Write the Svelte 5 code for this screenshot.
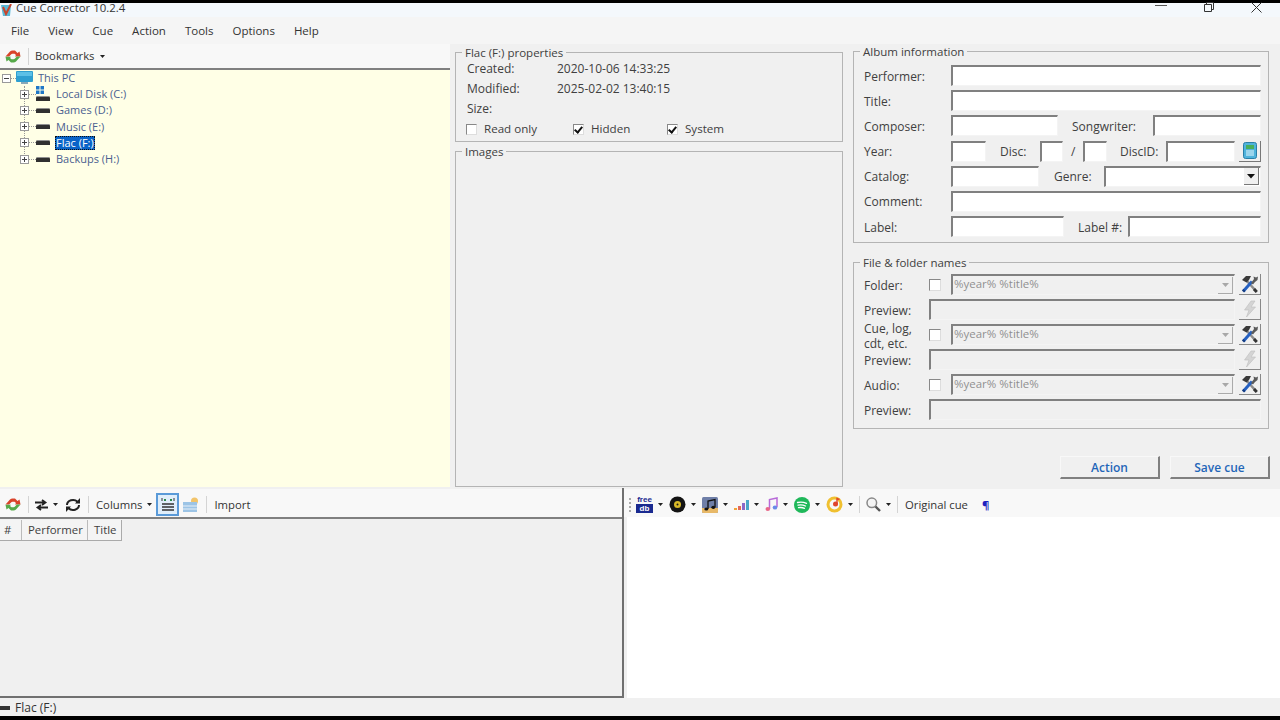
<script>
	const menus = ["File", "View", "Cue", "Action", "Tools", "Options", "Help"];
	const drives = [
		{ name: "Local Disk (C:)", win: true },
		{ name: "Games (D:)" },
		{ name: "Music (E:)" },
		{ name: "Flac (F:)", selected: true },
		{ name: "Backups (H:)" },
	];
	const nameRows = [
		{ label: "Folder:" },
		{ label: "Cue, log,\ncdt, etc." },
		{ label: "Audio:" },
	];
</script>

{#snippet caret()}
	<svg class="caret" width="5" height="3" viewBox="0 0 5 3"><path d="M0 0h5L2.500 3z" fill="#222" /></svg>
{/snippet}

{#snippet reload()}
	<svg width="16" height="13" viewBox="0 0 16 13">
		<path d="M.5 6.500 L5 1.500 Q6 .5 7.500 .5 H10 L12.500 3 L14.500 1.500 L15.500 6.500 H10 L11 5 L9.500 3.800 H7.500 Q6.500 3.800 6 4.500 L4.200 6.500z" fill="#d9432a" />
		<path d="M15.500 6.500 L11 11.500 Q10 12.500 8.500 12.500 H6 L3.500 10 L1.500 11.500 L.5 6.800 H6 L5 8 L6.500 9.200 H8.500 Q9.500 9.200 10 8.500 L11.800 6.500z" fill="#56a94a" />
	</svg>
{/snippet}

{#snippet drive()}
	<svg width="14" height="5" viewBox="0 0 14 5"><path d="M1 0h12l1 1.500V5H0V1.500z" fill="#303030" /><path d="M1 .5h12" stroke="#909090" /></svg>
{/snippet}

{#snippet tools()}
	<svg width="18" height="18" viewBox="0 0 18 18">
		<path d="M14.500 15.500 L6 6" stroke="#8c8c8c" stroke-width="2.600" />
		<path d="M15.800 17 L13 14" stroke="#333" stroke-width="3" />
		<path d="M2.500 16 L11 6.500" stroke="#2560c0" stroke-width="3" />
		<path d="M2 16.500l1.500-1.500" stroke="#123a80" stroke-width="3" />
		<path d="M1 5 L5 1 H10 L9 3 L8 5 L5.500 7.500z" fill="#3a3a3a" />
		<path d="M10 8 L13 4 L12.500 1.500 L15 2.500 L17 1.500 L16.500 5 L14 7 L12 9.500z" fill="#5a5a5a" />
	</svg>
{/snippet}

{#snippet bolt()}
	<svg width="14" height="18" viewBox="0 0 14 18"><path d="M8 1 L1.500 10 H6 L3.500 17 L12.500 7 H8 L12 1z" fill="#d4d4d4" stroke="#bdbdbd" stroke-width=".6" /></svg>
{/snippet}

<div class="app">
	<div class="blackbar"></div>

	<header class="titlebar">
		<svg class="appicon" width="11" height="12" viewBox="0 0 11 12">
			<path d="M0 1h10l-1 11H2z" fill="#58b7d6" />
			<path d="M2 3 L5 10 L10 0" fill="none" stroke="#c8452c" stroke-width="2" />
		</svg>
		<span class="apptitle">Cue Corrector 10.2.4</span>
		<div class="winbtns">
			<svg class="minbtn" width="12" height="6" viewBox="0 0 12 6"><path d="M0 3.500h12" stroke="#555" /></svg>
			<svg width="10" height="10" viewBox="0 0 10 10"><path d="M.5 2.500h7v7h-7zM2.500 2.500v-2h7v7h-2" fill="none" stroke="#333" /></svg>
			<svg width="11" height="11" viewBox="0 0 11 11"><path d="M.5 .5l10 10M10.500 .5l-10 10" stroke="#333" /></svg>
		</div>
	</header>

	<nav class="menubar">
		{#each menus as m}
			<span>{m}</span>
		{/each}
	</nav>

	<main class="main">
		<section class="leftpane">
			<div class="toolbar tb-top">
				<span class="ic-reload">{@render reload()}</span>
				<i class="sep"></i>
				<span class="tbtext">Bookmarks</span>
				{@render caret()}
			</div>
			<div class="tree">
				<div class="row root">
					<b class="exp minus"></b>
					<i class="dots short"></i>
					<svg width="17" height="14" viewBox="0 0 17 14">
						<rect x="0" y="0" width="17" height="11" rx="1" fill="#2f9fd0" />
						<rect x="1" y="1" width="15" height="4" fill="#5cc0e6" />
						<path d="M5 11h7v2H5z" fill="#8aa9b8" />
					</svg>
					<span class="node rootname">This PC</span>
				</div>
				<div class="children">
					{#each drives as d}
						<div class="row">
							<b class="exp"></b>
							<i class="dots"></i>
							<span class="driveic" class:win={d.win}>
								{#if d.win}
									<svg class="winlogo" width="8" height="8" viewBox="0 0 8 8"><path d="M0 0h3.500v3.500H0zM4.500 0H8v3.500H4.500zM0 4.500h3.500V8H0zM4.500 4.500H8V8H4.500z" fill="#1f78c8" /></svg>
								{/if}
								{@render drive()}
							</span>
							<span class="node" class:selected={d.selected}>{d.name}</span>
						</div>
					{/each}
				</div>
			</div>
		</section>

		<section class="midpane">
			<fieldset class="props">
				<legend>Flac (F:) properties</legend>
				<div class="prop"><span class="k">Created:</span><span>2020-10-06 14:33:25</span></div>
				<div class="prop"><span class="k">Modified:</span><span>2025-02-02 13:40:15</span></div>
				<div class="prop"><span class="k">Size:</span></div>
				<div class="checks">
					<label class="chk c1"><b class="box"></b>Read only</label>
					<label class="chk c2"><b class="box on"></b>Hidden</label>
					<label class="chk"><b class="box on"></b>System</label>
				</div>
			</fieldset>
			<fieldset class="images">
				<legend>Images</legend>
			</fieldset>
		</section>

		<section class="rightpane">
			<fieldset class="album">
				<legend>Album information</legend>
				<div class="frow"><span class="lab">Performer:</span><b class="in grow"></b></div>
				<div class="frow"><span class="lab">Title:</span><b class="in grow"></b></div>
				<div class="frow">
					<span class="lab">Composer:</span><b class="in w107"></b>
					<span class="lab2 l-song">Songwriter:</span><b class="in grow"></b>
				</div>
				<div class="frow">
					<span class="lab">Year:</span><b class="in w35"></b>
					<span class="lab2 l-disc">Disc:</span><b class="in w23"></b>
					<span class="lab2 l-slash">/</span><b class="in w24"></b>
					<span class="lab2 l-id">DiscID:</span><b class="in w69"></b>
					<span class="idbtn">
						<svg width="14" height="17" viewBox="0 0 14 17">
							<rect x=".5" y=".5" width="13" height="16" rx="2" fill="#4fb3dc" stroke="#2a7fa8" />
							<rect x="3" y="3" width="8" height="4" fill="#49b05a" />
							<path d="M3 9h8M3 11h8M3 13h8" stroke="#e8f6fc" />
						</svg>
					</span>
				</div>
				<div class="frow">
					<span class="lab">Catalog:</span><b class="in w88"></b>
					<span class="lab2 l-genre">Genre:</span>
					<b class="in grow combo"><span class="drop"><svg width="8" height="5" viewBox="0 0 8 5"><path d="M0 0h8L4 4.500z" fill="#111" /></svg></span></b>
				</div>
				<div class="frow"><span class="lab">Comment:</span><b class="in grow"></b></div>
				<div class="frow">
					<span class="lab">Label:</span><b class="in w113"></b>
					<span class="lab2 l-num">Label #:</span><b class="in grow"></b>
				</div>
			</fieldset>

			<fieldset class="names">
				<legend>File &amp; folder names</legend>
				{#each nameRows as r, i}
					<div class="frow nrow">
						<span class="nlab">{r.label}</span>
						<b class="box small"></b>
						<b class="in grow combo off">
							<span class="val">%year% %title%</span>
							<span class="drop dis"><svg width="7" height="4" viewBox="0 0 7 4"><path d="M0 0h7L3.500 4z" fill="#a8a8a8" /></svg></span>
						</b>
						<span class="toolbtn">{@render tools()}</span>
					</div>
					<div class="frow nrow">
						<span class="nlab">Preview:</span>
						<b class="in grow off"></b>
						{#if i < 2}
							<span class="toolbtn">{@render bolt()}</span>
						{/if}
					</div>
				{/each}
			</fieldset>

			<div class="actions">
				<button>Action</button>
				<button>Save cue</button>
			</div>
		</section>
	</main>

	<section class="bottom">
		<div class="listpane">
			<div class="toolbar tb-list">
				<span class="ic-reload">{@render reload()}</span>
				<i class="sep"></i>
				<svg class="ic-swap" width="13" height="12" viewBox="0 0 13 12">
					<path d="M0 3.500h10M7 1l3.500 2.500L7 6" fill="none" stroke="#222" stroke-width="1.800" />
					<path d="M13 8.500H3M6 6L2.500 8.500 6 11" fill="none" stroke="#222" stroke-width="1.800" />
				</svg>
				{@render caret()}
				<svg class="ic-sync" width="16" height="14" viewBox="0 0 16 14">
					<path d="M2 7a6 5 0 0 1 10.500-3.300M14 7a6 5 0 0 1-10.500 3.300" fill="none" stroke="#222" stroke-width="2" />
					<path d="M15 0v5.500H10zM1 14V8.500h5z" fill="#222" />
				</svg>
				<i class="sep s-cols"></i>
				<span class="tbtext">Columns</span>
				{@render caret()}
				<span class="toggled">
					<svg width="14" height="16" viewBox="0 0 14 16">
						<path d="M1 1v3M13 1v3" stroke="#333" />
						<path d="M3 3h2M9 3h2" stroke="#2a8a4a" stroke-width="2" />
						<path d="M1 7h12M1 10h12M1 13h12" stroke="#333" stroke-width="1.400" />
					</svg>
				</span>
				<svg class="ic-import" width="16" height="16" viewBox="0 0 16 16">
					<circle cx="11.500" cy="4" r="3.500" fill="#f2c46a" />
					<rect x="0" y="5" width="14" height="10" fill="#9cc4e6" />
					<path d="M0 9h14M0 12h14" stroke="#e8f0f8" />
				</svg>
				<i class="sep s-imp"></i>
				<span class="tbtext">Import</span>
			</div>
			<div class="thead">
				<span class="th hash">#</span>
				<span class="th perf">Performer</span>
				<span class="th ttl">Title</span>
			</div>
		</div>

		<div class="cuepane">
			<div class="toolbar tb-cue">
				<i class="grip"></i>
				<span class="freedb"><em>free</em><strong>db</strong></span>
				{@render caret()}
				<svg width="17" height="17" viewBox="0 0 17 17">
					<circle cx="8.500" cy="8.500" r="8" fill="#141414" />
					<circle cx="8.500" cy="8.500" r="3.500" fill="#d8b928" />
					<circle cx="8.500" cy="8.500" r="1" fill="#141414" />
				</svg>
				{@render caret()}
				<svg width="16" height="16" viewBox="0 0 16 16">
					<rect width="16" height="16" rx="1.500" fill="#6f7fa8" />
					<path d="M0 11h16v3.500a1.500 1.500 0 0 1-1.500 1.500h-13A1.500 1.500 0 0 1 0 14.500z" fill="#e8b968" />
					<path d="M6 12V4l7-1.500V10" fill="none" stroke="#111" stroke-width="1.300" />
					<ellipse cx="4.300" cy="12" rx="2" ry="1.600" fill="#111" />
					<ellipse cx="11.300" cy="10.300" rx="2" ry="1.600" fill="#111" />
				</svg>
				{@render caret()}
				<svg width="15" height="12" viewBox="0 0 15 12">
					<path d="M0 9h3v2H0z" fill="#f2a33a" />
					<path d="M4 7h3v4H4z" fill="#e46a5a" />
					<path d="M8 4h3v7H8z" fill="#8a6ac8" />
					<path d="M12 1h3v10h-3z" fill="#4aa8c8" />
				</svg>
				{@render caret()}
				<svg class="ic-note" width="13" height="15" viewBox="0 0 13 15">
					<path d="M4.500 12V2.500L12 1v9" fill="none" stroke="#b86ad8" stroke-width="1.500" />
					<ellipse cx="2.800" cy="12" rx="2.300" ry="2" fill="#e8688a" />
					<ellipse cx="10" cy="10.500" rx="2.300" ry="2" fill="#6a8ae8" />
				</svg>
				{@render caret()}
				<svg width="16" height="16" viewBox="0 0 16 16">
					<circle cx="8" cy="8" r="8" fill="#1fb85a" />
					<path d="M3.500 5.500c3-.8 6-.6 9 .9M4 8.200c2.500-.6 5-.4 7.500.8M4.500 10.700c2-.4 4-.3 6 .6" fill="none" stroke="#fff" stroke-width="1.300" stroke-linecap="round" />
				</svg>
				{@render caret()}
				<svg width="17" height="17" viewBox="0 0 17 17">
					<circle cx="8.500" cy="8.500" r="6.500" fill="none" stroke="#f0c030" stroke-width="3" />
					<circle cx="9.500" cy="8" r="2.500" fill="#e0452c" />
					<path d="M11 8V2.500l2.500 1" fill="none" stroke="#e0452c" stroke-width="1.400" />
				</svg>
				{@render caret()}
				<i class="sep s-find"></i>
				<svg class="ic-find" width="15" height="15" viewBox="0 0 15 15">
					<circle cx="5.800" cy="5.800" r="4.800" fill="#f4f4f4" stroke="#888" stroke-width="1.500" />
					<path d="M9.500 9.500l4.500 4.500" stroke="#555" stroke-width="2.400" />
				</svg>
				{@render caret()}
				<i class="sep s-orig"></i>
				<span class="tbtext">Original cue</span>
				<span class="pilcrow">¶</span>
			</div>
			<div class="cuetext"></div>
		</div>
	</section>

	<footer class="status">
		<svg width="10" height="4" viewBox="0 0 10 4"><path d="M0 0h10v4H0z" fill="#333" /></svg>
		<span>Flac (F:)</span>
	</footer>
	<div class="blackfoot"></div>
</div>

<style>
	:global(body) {
		margin: 0;
		background: #f0f0f0;
	}

	.app {
		width: 1280px;
		height: 720px;
		overflow: hidden;
		display: flex;
		flex-direction: column;
		background: #f0f0f0;
		font-family: "Open Sans", "Liberation Sans", sans-serif;
		font-size: 12px;
		line-height: 14px;
		color: #404040;
		white-space: nowrap;
	}

	.blackbar {
		height: 3px;
		background: #000;
	}

	.blackfoot {
		height: 4px;
		background: #000;
	}

	.titlebar {
		height: 14px;
		box-sizing: border-box;
		padding: 0 0 4px 1px;
		display: flex;
		align-items: center;
		background: #f4f8fc;
	}

	.appicon {
		margin-bottom: -4px;
	}

	.apptitle {
		margin-left: 4px;
		font-size: 11.400px;
		color: #333;
	}

	.winbtns {
		margin-left: auto;
		width: 107px;
		margin-right: 18px;
		margin-bottom: 2px;
		display: flex;
		justify-content: space-between;
		align-items: center;
	}

	.minbtn {
		align-self: flex-start;
	}

	.menubar {
		height: 27px;
		box-sizing: border-box;
		padding: 1px 0 0 11px;
		display: flex;
		align-items: center;
		gap: 19px;
		background: #f5f5f5;
		color: #333;
		font-size: 11.500px;
	}

	.main {
		height: 444px;
		display: flex;
	}

	.leftpane {
		width: 450px;
		display: flex;
		flex-direction: column;
	}

	.toolbar {
		display: flex;
		align-items: center;
		background: #f8f8f8;
		flex: none;
		font-size: 11.300px;
	}

	.tb-top {
		height: 24px;
		padding-left: 5px;
		border-bottom: 2px solid #808080;
	}

	.ic-reload {
		display: flex;
	}

	.sep {
		width: 1px;
		height: 17px;
		background: #d4d4d4;
		margin: 0 6px 0 7px;
	}

	.tbtext {
		color: #333;
	}

	.caret {
		margin-left: 5px;
		flex: none;
	}

	.tree {
		flex: 1;
		background: #ffffe6;
		margin-bottom: 1px;
		color: #4a6090;
		font-size: 11px;
	}

	.row {
		height: 16.200px;
		display: flex;
		align-items: center;
	}

	.root {
		padding-left: 2px;
	}

	.children {
		margin-left: 24px;
		border-left: 1px dotted #999;
		height: 72px;
	}

	.children .row {
		margin-left: -5px;
	}

	.exp {
		width: 7px;
		height: 7px;
		border: 1px solid #9a9a9a;
		background:
			linear-gradient(#444, #444) center / 5px 1px no-repeat,
			linear-gradient(#444, #444) center / 1px 5px no-repeat,
			#fff;
		flex: none;
	}

	.exp.minus {
		background:
			linear-gradient(#444, #444) center / 5px 1px no-repeat,
			#fff;
	}

	.dots {
		width: 7px;
		border-top: 1px dotted #999;
		flex: none;
	}

	.dots.short {
		width: 5px;
	}

	.driveic {
		width: 15px;
		height: 14px;
		flex: none;
		display: flex;
		align-items: center;
		position: relative;
	}

	.driveic.win {
		align-items: flex-end;
	}

	.winlogo {
		position: absolute;
		top: -1px;
		left: 0;
	}

	.node {
		margin-left: 4px;
		padding: 0 1px;
	}

	.selected {
		background: #0a64c8;
		color: #fff;
		outline: 1px dotted #111;
		outline-offset: -1px;
	}

	.midpane {
		width: 388px;
		margin-left: 5px;
		display: flex;
		flex-direction: column;
	}

	fieldset {
		margin: 0;
		border: 1px solid #b4b4b4;
		padding: 0;
		min-width: 0;
	}

	legend {
		margin-left: 6px;
		padding: 0 3px;
		line-height: 13px;
		font-size: 11.500px;
		color: #404040;
	}

	.props {
		margin-top: 2px;
		height: 94px;
		flex: none;
		padding-left: 11px;
	}

	.props legend {
		margin-left: -5px;
	}

	.prop {
		height: 20px;
		display: flex;
		align-items: center;
	}

	.k {
		width: 90px;
	}

	.checks {
		display: flex;
		margin-top: 3px;
		margin-left: -1px;
		font-size: 11.600px;
	}

	.chk {
		display: flex;
		align-items: center;
		gap: 7px;
		width: 107px;
	}

	.chk.c2 {
		width: 94px;
	}

	.box {
		width: 9px;
		height: 9px;
		flex: none;
		background: #fff;
		border: 1px solid #888;
		border-right-color: #ddd;
		border-bottom-color: #ddd;
		display: block;
		position: relative;
	}

	.box.on::after {
		content: "";
		position: absolute;
		left: 2px;
		top: 0;
		width: 3px;
		height: 6px;
		border: solid #111;
		border-width: 0 2px 2px 0;
		transform: rotate(40deg);
	}

	.images {
		margin-top: 3px;
		flex: 1;
		margin-bottom: 1px;
	}

	.rightpane {
		width: 416px;
		margin-left: 10px;
		display: flex;
		flex-direction: column;
	}

	.album {
		margin-top: 1px;
		height: 198px;
		flex: none;
		padding: 7px 7px 0 9px;
		box-sizing: border-box;
	}

	.album legend,
	.names legend {
		margin-left: -3px;
	}

	.frow {
		height: 21px;
		display: flex;
		align-items: center;
		margin-bottom: 4.200px;
	}

	.frow > span:not(.idbtn):not(.toolbtn) {
		padding-top: 2px;
	}

	.lab {
		width: 88px;
		box-sizing: border-box;
		padding-left: 1px;
		flex: none;
	}

	.lab2 {
		flex: none;
	}

	.l-song {
		margin: 0 20px 0 14px;
		width: 61px;
	}

	.l-disc {
		margin: 0 16px 0 14px;
		width: 24px;
	}

	.l-slash {
		margin: 0 9px 0 8px;
		width: 3px;
	}

	.l-id {
		margin: 0 10px 0 13px;
		width: 36px;
	}

	.l-genre {
		margin: 0 15px 0 15px;
		width: 35px;
	}

	.l-num {
		margin: 0 9px 0 14px;
		width: 41px;
	}

	.in {
		display: flex;
		align-items: center;
		height: 21px;
		box-sizing: border-box;
		background: #fff;
		border-top: 2px solid #808080;
		border-left: 2px solid #808080;
		border-right: 1px solid #f4f4f4;
		border-bottom: 1px solid #f4f4f4;
		font-weight: 400;
		flex: none;
		position: relative;
	}

	.grow {
		flex: 1;
		min-width: 0;
	}

	.w107 { width: 107px; }
	.w35 { width: 35px; }
	.w23 { width: 23px; }
	.w24 { width: 24px; }
	.w69 { width: 69px; }
	.w88 { width: 88px; }
	.w113 { width: 113px; }

	.idbtn {
		width: 22px;
		height: 21px;
		margin-left: 4px;
		box-sizing: border-box;
		flex: none;
		display: flex;
		align-items: center;
		justify-content: center;
		border-right: 1px solid #777;
		border-bottom: 1px solid #777;
	}

	.combo {
		justify-content: space-between;
	}

	.drop {
		margin-left: auto;
		width: 15px;
		height: 17px;
		display: flex;
		align-items: center;
		justify-content: center;
		background: #f0f0f0;
		border-right: 1px solid #777;
		border-bottom: 1px solid #777;
		margin-right: 1px;
		box-sizing: border-box;
	}

	.drop.dis {
		border-color: #aaa;
	}

	.off {
		background: #f0f0f0;
	}

	.val {
		color: #909090;
		padding-left: 1px;
		font-size: 11.500px;
		margin-top: -2px;
	}

	.names {
		margin-top: 13px;
		height: 173px;
		flex: none;
		padding: 5px 7px 0 9px;
		box-sizing: border-box;
	}

	.nrow {
		margin-bottom: 4px;
	}

	.nlab {
		width: 66px;
		box-sizing: border-box;
		padding-left: 1px;
		flex: none;
		white-space: pre-line;
		line-height: 15px;
	}

	.box.small {
		width: 10px;
		height: 10px;
		margin-right: 10px;
	}

	.toolbtn {
		width: 22px;
		height: 21px;
		margin-left: 4px;
		box-sizing: border-box;
		flex: none;
		display: flex;
		align-items: center;
		justify-content: center;
		border-right: 1px solid #888;
		border-bottom: 1px solid #888;
	}

	.actions {
		display: flex;
		justify-content: flex-end;
		gap: 10px;
		margin-top: 27px;
		margin-right: -1px;
	}

	button {
		width: 100px;
		height: 23px;
		padding: 0;
		font: 600 12px "Open Sans", "Liberation Sans", sans-serif;
		color: #1f66b8;
		background: #f0f0f0;
		border: 0;
		border-right: 2px solid #808080;
		border-bottom: 2px solid #808080;
		border-top: 1px solid #f8f8f8;
		border-left: 1px solid #f8f8f8;
	}

	.bottom {
		height: 210px;
		display: flex;
	}

	.listpane {
		width: 624px;
		box-sizing: border-box;
		border-right: 2px solid #707070;
		border-bottom: 2px solid #707070;
	}

	.tb-list {
		height: 30px;
		box-sizing: border-box;
		padding: 3px 0 0 5px;
		margin-top: 1px;
		border-bottom: 2px solid #808080;
	}

	.ic-sync {
		margin-left: 7px;
	}

	.s-cols {
		margin: 0 7px;
	}

	.toggled {
		width: 23px;
		height: 23px;
		margin-left: 4px;
		box-sizing: border-box;
		display: flex;
		align-items: center;
		justify-content: center;
		border: 2px solid #5a9ad8;
		background: #e0eefa;
	}

	.ic-import {
		margin-left: 4px;
	}

	.s-imp {
		margin: 0 7px;
	}

	.thead {
		display: flex;
		width: 122px;
		height: 21px;
		box-sizing: border-box;
		margin-top: 1px;
		border-right: 1px solid #aaa;
		border-bottom: 1px solid #aaa;
		background: #f4f4f4;
		font-size: 11.400px;
	}

	.th {
		display: flex;
		align-items: center;
		box-sizing: border-box;
		padding-left: 6px;
		border-right: 1px solid #bbb;
	}

	.hash { width: 22px; padding-left: 4px; }
	.perf { width: 66px; }
	.ttl { flex: 1; border-right: 0; }

	.cuepane {
		flex: 1;
		display: flex;
		flex-direction: column;
	}

	.tb-cue {
		height: 28px;
		box-sizing: border-box;
		padding: 3px 0 0 5px;
		margin-top: 1px;
		background: #f8f8f8;
	}

	.grip {
		width: 2px;
		height: 14px;
		margin-right: 5px;
		background: repeating-linear-gradient(#aaa 0 2px, transparent 2px 4px);
	}

	.freedb {
		width: 17px;
		height: 17px;
		display: flex;
		flex-direction: column;
		align-items: center;
		font-size: 8px;
		line-height: 8px;
		font-family: "Liberation Sans", sans-serif;
		font-weight: 700;
		color: #1a2a90;
	}

	.freedb em {
		font-style: normal;
	}

	.freedb strong {
		width: 17px;
		background: #1a2a90;
		color: #fff;
		text-align: center;
		line-height: 9px;
	}

	.tb-cue svg:not(.caret) {
		margin-left: 6px;
		flex: none;
	}

	.s-find {
		margin: 0 0 0 6px;
	}

	.s-orig {
		margin: 0 7px 0 6px;
	}

	.tb-cue .ic-find {
		margin-left: 4px;
	}

	.tb-cue .ic-note {
		margin-left: 8px;
	}

	.pilcrow {
		margin-left: 14px;
		color: #2020c0;
		font-weight: 700;
	}

	.cuetext {
		flex: 1;
		background: #fff;
		margin-left: 3px;
	}

	.status {
		height: 18px;
		display: flex;
		align-items: center;
		gap: 5px;
		background: #f0f0f0;
		color: #333;
		padding-top: 2px;
		box-sizing: border-box;
	}
</style>
